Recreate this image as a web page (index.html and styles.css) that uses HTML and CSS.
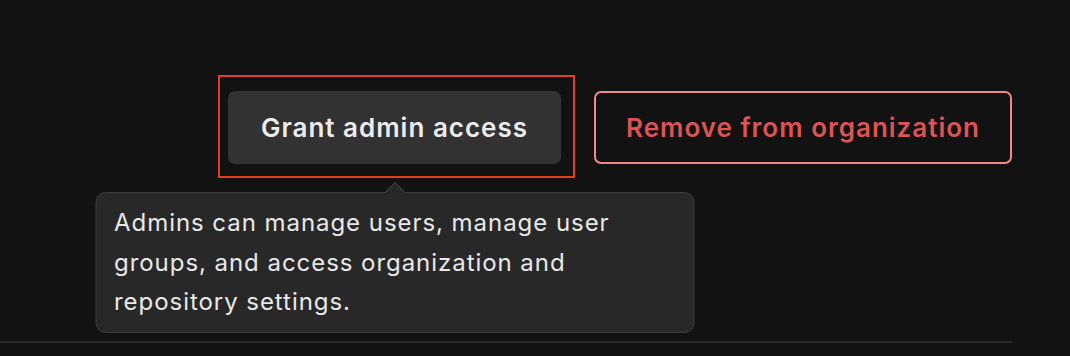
FILE: index.html
```html
<!DOCTYPE html>
<html lang="en">
<head>
    <meta charset="UTF-8">
    <meta name="viewport" content="width=device-width, initial-scale=1.0">
    <title>Member settings</title>
    <link rel="stylesheet" href="styles.css">
</head>
<body>
    <div class="member-panel">
        <div class="member-actions">
            <div class="action-wrap">
                <button class="btn btn-grant">Grant admin access</button>
                <span class="highlight"></span>
                <div class="tooltip">
                    Admins can manage users, manage user groups, and access organization and repository settings.
                </div>
            </div>
            <button class="btn btn-remove">Remove from organization</button>
        </div>
    </div>
</body>
</html>
```

FILE: styles.css
```css
:root {
    --bg-color: #121212;
    --button-color: #323232;
    --tooltip-color: #282828;
    --tooltip-border: #3d3d3d;
    --danger-color: #de5454;
    --danger-border: #f08a8a;
    --text-color: #ececec;
}

* {
    margin: 0;
    padding: 0;
    box-sizing: border-box;
}

body {
    font-family: Inter, "Noto Sans", sans-serif;
    background-color: var(--bg-color);
    color: var(--text-color);
    height: 356px;
    overflow: hidden;
}

.member-panel {
    width: 1012px;
    height: 343px;
    padding-top: 91px;
    border-bottom: 2px solid #2a2a2a;
}

.member-actions {
    display: flex;
    justify-content: flex-end;
    gap: 33px;
}

.action-wrap {
    position: relative;
}

.btn {
    height: 73px;
    font-family: inherit;
    font-size: 26px;
    font-weight: 600;
    letter-spacing: 1px;
    border-radius: 7px;
    cursor: pointer;
}

.btn-grant {
    width: 333px;
    background-color: var(--button-color);
    color: var(--text-color);
    border: none;
}

.btn-remove {
    width: 418px;
    background-color: transparent;
    color: var(--danger-color);
    border: 2px solid var(--danger-border);
}

.highlight {
    position: absolute;
    left: -10px;
    top: -16px;
    right: -14px;
    bottom: -14px;
    border: 2px solid #e33d22;
    pointer-events: none;
}

.tooltip {
    position: absolute;
    top: 101px;
    left: 50%;
    transform: translateX(-50%);
    width: 599px;
    padding: 10px 18px;
    background-color: var(--tooltip-color);
    border: 1px solid var(--tooltip-border);
    border-radius: 10px;
    font-size: 24px;
    line-height: 39.6px;
    letter-spacing: 0.95px;
    color: #e8e8e8;
}

.tooltip::before {
    content: "";
    position: absolute;
    top: -8px;
    left: 50%;
    width: 14px;
    height: 14px;
    margin-left: -7px;
    background-color: var(--tooltip-color);
    border-top: 1px solid var(--tooltip-border);
    border-left: 1px solid var(--tooltip-border);
    transform: rotate(45deg);
}
```
